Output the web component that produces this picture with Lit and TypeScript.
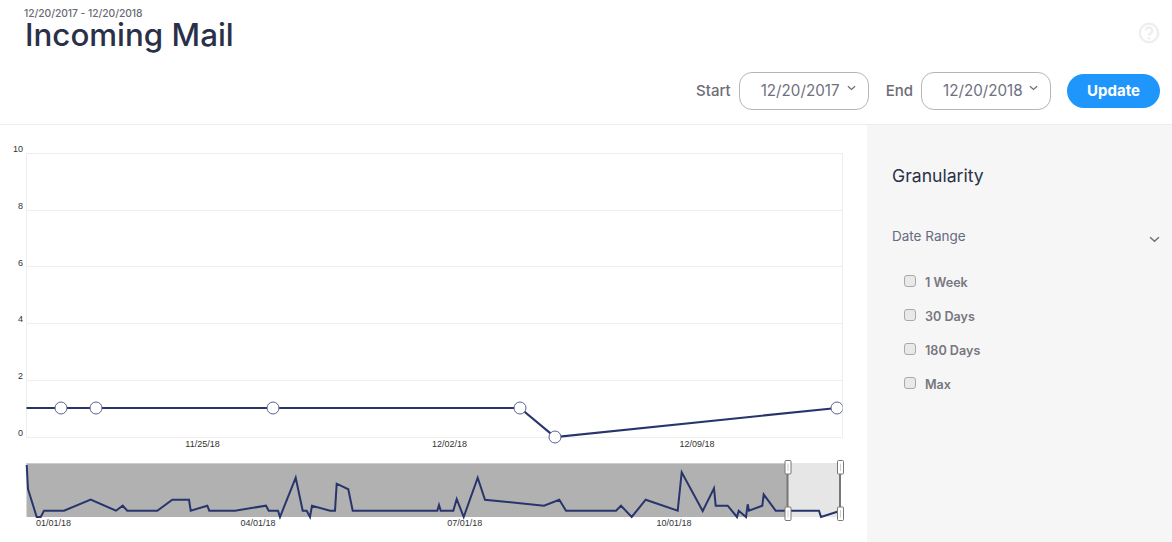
import { LitElement, html, css, svg } from "lit";
import { customElement } from "lit/decorators.js";

const MINI: [number, number][] = [[26.7,465],[28,489],[36.7,517],[40.7,517],[44,510.7],[64,510.7],[90.7,499.7],[116,510.7],[122.7,505.7],[127.3,510.7],[157.3,510.7],[172.3,499.7],[189,499.7],[190.7,510.7],[207.3,505.7],[209.3,510.7],[235,510.7],[266,505.7],[268.7,510.7],[278,510.7],[280,517],[295.7,477.7],[302.7,510.7],[306.7,510.7],[310,517],[312,505.7],[330,510.7],[335,510.7],[336.7,483.7],[348.3,489.3],[352.7,510.7],[437.3,510.7],[439,505],[440.7,510.7],[453.3,510.7],[456.7,499],[463.7,517],[477.7,477.7],[485,499.7],[544,505.7],[559.3,499.7],[566,510.7],[616,510.7],[621,505.7],[631.7,517],[645.7,499.7],[677.7,510.7],[681.7,472.3],[702.7,511],[714,488.3],[715.7,505.7],[727.7,505.7],[737,517],[738.7,510.7],[746,517],[747.7,504.3],[749,510.7],[762.3,505.7],[763.7,494.3],[775.7,510.7],[819,510.7],[821,517],[837.3,511.7]];
const MAIN: [number, number][] = [[26.5,408],[61,408],[96,408],[273,408],[520,408],[555,437],[837,408]];
const GRID = [153, 210, 266, 323, 380, 437];
const YL: [string, number][] = [["10",151.5],["8",208.5],["6",265.5],["4",321.5],["2",378.5],["0",435.5]];
const XL: [string, number][] = [["11/25/18",202.5],["12/02/18",449.5],["12/09/18",697]];
const ML: [string, number][] = [["01/01/18",53.5],["04/01/18",258],["07/01/18",464.7],["10/01/18",674]];
const pts = (p: [number, number][]) => p.map((q) => q.join(",")).join(" ");

const handle = (x: number) => svg`
  <line class="hline" x1=${x} x2=${x} y1="463" y2="517"></line>
  ${[460.5, 507].map((y) => svg`
    <rect class="hbox" x=${x - 2.5} y=${y} width="6" height="13.5" rx="1"></rect>
    <line class="hgrip" x1=${x + 0.5} x2=${x + 0.5} y1=${y + 3} y2=${y + 10.5}></line>`)}
`;

const chevron = html`<svg class="chev" viewBox="0 0 10 6" width="9" height="6"><path d="M1 1l4 3.6L9 1" fill="none" stroke="currentColor" stroke-width="1.4"/></svg>`;

@customElement("app-root")
export class AppRoot extends LitElement {
  static styles = css`
    :host { display: block; width: 1172px; height: 542px; overflow: hidden; background: #fff; font-family: "Inter", "Liberation Sans", sans-serif; color: #2b3050; }
    .header { height: 124px; border-bottom: 1px solid #ececec; display: flex; flex-direction: column; box-sizing: content-box; }
    .top { display: flex; justify-content: space-between; padding: 8px 12px 0 24px; height: 72px; box-sizing: border-box; }
    .range { font: 500 10.3px/10px "Inter", sans-serif; color: #6a6a74; letter-spacing: -0.05px; }
    h1 { margin: 4px 0 0 1px; font: 500 31.3px/26px "Inter", sans-serif; color: #2a3048; letter-spacing: 0; }
    .help { margin-top: 14px; }
    .controls { display: flex; justify-content: flex-end; align-items: center; padding-right: 12px; height: 38px; }
    .lbl { font: 500 15px/18px "Inter", sans-serif; color: #6d6d78; margin-right: 8px; }
    .select { width: 130px; height: 38px; box-sizing: border-box; border: 1px solid #b5b5b5; border-radius: 13px; display: flex; align-items: center; padding-left: 21px; font: 400 15.2px/20px "Inter", sans-serif; color: #6e7080; }
    .select span { width: 86px; }
    .chev { color: #6e7080; }
    .select .chev { margin-top: -6px; }
    .gap1 { margin-right: 17px; }
    .gap2 { margin-right: 16px; }
    .update { width: 93px; height: 34px; border: 0; border-radius: 17px; background: #1f96fb; color: #fff; font: 700 15px/18px "Inter", sans-serif; padding: 0; }
    .body { display: flex; height: 417px; }
    .chart { width: 867px; flex: none; display: block; }
    .side { flex: 1; background: #f6f6f6; padding: 40px 12px 0 25px; }
    h2 { margin: 0; font: 400 17.6px/22px "Inter", sans-serif; color: #2a3048; }
    .dr { display: flex; justify-content: space-between; align-items: center; margin-top: 39px; font: 400 13.5px/20px "Inter", sans-serif; color: #666a80; }
    .dr .chev { margin-top: 7px; width: 11px; height: 7px; }
    .opts { margin: 27px 0 0 12px; display: flex; flex-direction: column; gap: 14px; }
    .opts label { display: flex; align-items: center; height: 20px; font: 600 12.6px/20px "Inter", sans-serif; color: #77777f; }
    .opts input { appearance: none; width: 12px; height: 12px; margin: -5px 9px 0 0; box-sizing: border-box; border: 1px solid #a9a9a9; border-radius: 3px; background: #e9e9e9; }
    .grid { stroke: #eeeeee; stroke-width: 1; }
    .tick { font: 9px "Liberation Sans", sans-serif; fill: #333; }
    .main { fill: none; stroke: #28356c; stroke-width: 2.2; }
    .dot { fill: #fff; stroke: #5a6190; stroke-width: 1; }
    .mini { fill: none; stroke: #28356c; stroke-width: 2; stroke-linejoin: miter; }
    .sel { fill: #b1b1b1; }
    .unsel { fill: #e6e6e6; }
    .topedge { stroke: #cbcbcb; }
    .hline { stroke: #777; stroke-width: 2; }
    .hbox { fill: #fff; stroke: #777; stroke-width: 1; }
    .hgrip { stroke: #ccc; stroke-width: 1; }
  `;

  render() {
    return html`
      <div class="header">
        <div class="top">
          <div>
            <div class="range">12/20/2017 - 12/20/2018</div>
            <h1>Incoming Mail</h1>
          </div>
          <svg class="help" width="22" height="22" viewBox="0 0 22 22">
            <circle cx="11" cy="11" r="9.2" fill="none" stroke="#eeeeee" stroke-width="2.4"/>
            <path d="M7.8 8.6a3.2 3.2 0 1 1 4.9 2.7c-1.1.7-1.7 1.2-1.7 2.4" fill="none" stroke="#eeeeee" stroke-width="2.4"/>
            <circle cx="11" cy="16.3" r="1.3" fill="#eeeeee"/>
          </svg>
        </div>
        <div class="controls">
          <span class="lbl">Start</span>
          <div class="select gap1"><span>12/20/2017</span>${chevron}</div>
          <span class="lbl">End</span>
          <div class="select gap2"><span>12/20/2018</span>${chevron}</div>
          <button class="update">Update</button>
        </div>
      </div>
      <div class="body">
        <svg class="chart" width="867" height="417" viewBox="0 125 867 417">
          <defs><clipPath id="plot"><rect x="26" y="140" width="816.5" height="310"></rect></clipPath></defs>
          ${GRID.map((y) => svg`<line class="grid" x1="26.5" x2="842.5" y1=${y + 0.5} y2=${y + 0.5}></line>`)}
          <line class="grid" x1="26.5" x2="26.5" y1="153" y2="438"></line>
          <line class="grid" x1="842.5" x2="842.5" y1="153" y2="438"></line>
          ${YL.map(([t, y]) => svg`<text class="tick" x="23" y=${y} text-anchor="end">${t}</text>`)}
          ${XL.map(([t, x]) => svg`<text class="tick" x=${x} y="447" text-anchor="middle">${t}</text>`)}
          <g clip-path="url(#plot)">
            <polyline class="main" points=${pts(MAIN)}></polyline>
            ${MAIN.slice(1).map(([x, y]) => svg`<circle class="dot" cx=${x} cy=${y} r="6"></circle>`)}
          </g>
          <rect class="sel" x="26.5" y="463" width="760.5" height="54"></rect>
          <rect class="unsel" x="787" y="463" width="53.5" height="54"></rect>
          <line class="topedge" x1="26.5" x2="787" y1="463.5" y2="463.5"></line>
          <polyline class="mini" points=${pts(MINI)}></polyline>
          ${handle(787.5)}
          ${handle(840)}
          ${ML.map(([t, x]) => svg`<text class="tick" x=${x} y="526" text-anchor="middle">${t}</text>`)}
        </svg>
        <aside class="side">
          <h2>Granularity</h2>
          <div class="dr"><span>Date Range</span>${chevron}</div>
          <div class="opts">
            ${["1 Week", "30 Days", "180 Days", "Max"].map((o) => html`<label><input type="checkbox" />${o}</label>`)}
          </div>
        </aside>
      </div>
    `;
  }
}
